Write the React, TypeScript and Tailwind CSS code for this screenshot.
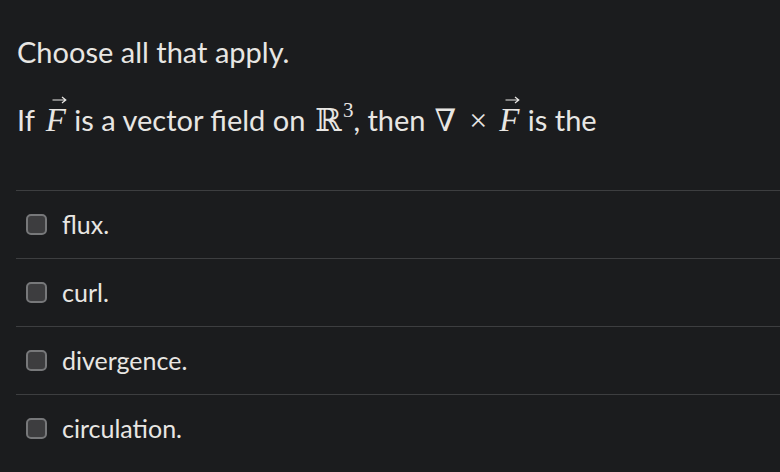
const options = ['flux.', 'curl.', 'divergence.', 'circulation.'];

const dejaSerif = { fontFamily: '"DejaVu Serif", "Liberation Serif", serif' };
const libSerif = { fontFamily: '"Liberation Serif", "DejaVu Serif", serif' };

function VecF({ className = '' }: { className?: string }) {
  return (
    <span className={`relative inline-block leading-none ${className}`}>
      <span className="italic text-[33px]" style={libSerif}>F</span>
      <svg className="absolute left-[6px] top-[-8px]" width="15" height="8" viewBox="0 0 15 8" fill="none">
        <path d="M0.5 4 H13.5 M10 1 L13.8 4 L10 7" stroke="#e8e6e3" strokeWidth="1.2" />
      </svg>
    </span>
  );
}

export default function App() {
  return (
    <div className="w-[780px] h-[472px] bg-[#1b1c1e] text-[#e8e6e3] overflow-hidden" style={{ fontFamily: 'Lato, "Noto Sans", sans-serif' }}>
      <div className="pl-[17px] pt-[34px]">
        <p className="text-[29px] leading-[36px]">Choose all that apply.</p>
        <p className="text-[29px] leading-[36px] h-[36px] mt-[32px] whitespace-nowrap">
          If <VecF className="ml-[4px] mr-[1px]" /> is a vector field on
          <span className="inline-block leading-none ml-[10px]">
            <span className="text-[32px]" style={dejaSerif}>ℝ</span>
            <span className="text-[21px] relative top-[-14px] ml-[1px]" style={libSerif}>3</span>
          </span>
          , then
          <span className="inline-block leading-none ml-[9px] text-[31px]" style={dejaSerif}>∇</span>
          <span className="inline-block leading-none ml-[13px] text-[32px]" style={libSerif}>×</span>
          <VecF className="ml-[12px] mr-[1px]" /> is the
        </p>
      </div>
      <div className="ml-4 mt-[52px]">
        {options.map((o) => (
          <div key={o} className="h-[68px] border-t border-[#3d3e40] flex items-center">
            <span className="ml-[10px] w-[21px] h-[21px] rounded-[5px] border-2 border-[#77787a] bg-[#3d3d3f]" />
            <span className="ml-[15px] text-[25px]">{o}</span>
          </div>
        ))}
      </div>
    </div>
  );
}
